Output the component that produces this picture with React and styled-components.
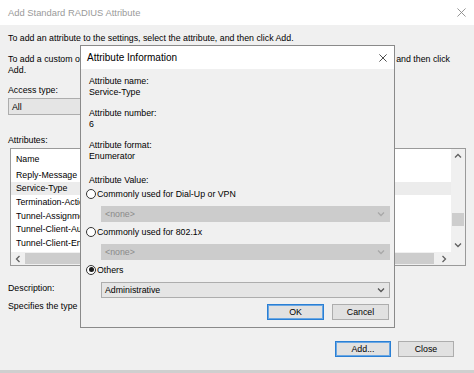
import React from 'react';
import styled, { createGlobalStyle } from 'styled-components';

const GlobalStyle = createGlobalStyle`
    html, body {
        margin: 0;
        padding: 0;
        background: #f0f0f0;
    }
    body {
        font-family: 'Liberation Sans', Arial, sans-serif;
        font-size: 8.8px;
        color: #000;
    }
    * {
        box-sizing: border-box;
    }
`;

const Window = styled.div`
    position: relative;
    width: 474px;
    height: 373px;
    overflow: hidden;
    display: flex;
    flex-direction: column;
    background: #f0f0f0;
`;

const TitleBar = styled.div`
    flex: none;
    height: ${p => p.$h}px;
    display: flex;
    align-items: center;
    justify-content: space-between;
    padding: 0 ${p => p.$pr}px 0 ${p => p.$pl}px;
    background: #fff;
    color: ${p => (p.$active ? '#000' : '#9a9a9a')};
    font-size: ${p => (p.$active ? 10 : 9.4)}px;
    white-space: nowrap;
`;

const Body = styled.div`
    flex: 1;
    display: flex;
    flex-direction: column;
    padding: 7px 8px 0;
`;

const Text = styled.div`
    line-height: ${p => p.$lh || 12}px;
    margin-top: ${p => p.$mt || 0}px;
    white-space: nowrap;
`;

const WrapLine = styled.div`
    display: flex;
    padding-right: 16px;
`;

const Tail = styled.span`
    margin-left: auto;
    white-space: nowrap;
`;

const Combo = styled.div`
    height: ${p => p.$h || 16}px;
    width: ${p => (p.$w ? `${p.$w}px` : 'auto')};
    margin: ${p => p.$m || '0'};
    display: flex;
    align-items: center;
    justify-content: space-between;
    padding: 0 4px 0 3px;
    background: ${p => (p.$disabled ? '#cccccc' : '#e5e5e5')};
    border: 1px solid ${p => (p.$disabled ? '#cccccc' : '#adadad')};
    color: ${p => (p.$disabled ? '#8a8a8a' : '#000')};
    white-space: nowrap;
`;

const ListBox = styled.div`
    margin: 2px 0 0 2px;
    height: 118px;
    border: 1px solid #9a9a9a;
    background: #fff;
    display: grid;
    grid-template-columns: 1fr 14px;
    grid-template-rows: 1fr 13px;
    overflow: hidden;
`;

const ListContent = styled.div`
    overflow: hidden;
`;

const ListHeader = styled.div`
    height: 19px;
    display: flex;
    align-items: center;
    padding-left: 5px;
`;

const ListRow = styled.div`
    height: 13.6px;
    display: flex;
    align-items: center;
    padding-left: 5px;
    background: ${p => (p.$selected ? '#ececec' : 'transparent')};
    white-space: nowrap;
`;

const VScroll = styled.div`
    display: flex;
    flex-direction: column;
    background: #f0f0f0;
`;

const HScroll = styled.div`
    display: flex;
    align-items: center;
    background: #f0f0f0;
`;

const ScrollButton = styled.div`
    flex: none;
    width: ${p => p.$w}px;
    height: ${p => p.$h}px;
    display: flex;
    align-items: center;
    justify-content: center;
`;

const VThumb = styled.div`
    height: 13px;
    margin: ${p => p.$offset}px 1px 0;
    background: #cdcdcd;
`;

const HThumb = styled.div`
    width: ${p => p.$len}px;
    height: 11px;
    background: #cdcdcd;
`;

const Spacer = styled.div`
    flex: 1;
`;

const Corner = styled.div`
    background: #f0f0f0;
`;

const Footer = styled.div`
    display: flex;
    justify-content: flex-end;
    gap: ${p => p.$gap}px;
    margin-top: ${p => p.$mt}px;
    padding-right: ${p => p.$pr}px;
`;

const Button = styled.button`
    width: ${p => p.$w}px;
    height: 16px;
    padding: 0;
    font-family: inherit;
    font-size: 8.8px;
    color: #000;
    background: #e1e1e1;
    border: 1px solid ${p => (p.$default ? '#2a7fd4' : '#adadad')};
    box-shadow: ${p => (p.$default ? 'inset 0 0 0 1px #6aa7e3' : 'none')};
`;

const BottomStrip = styled.div`
    flex: none;
    height: 3px;
    background: #cfcfcf;
`;

const Dialog = styled.div`
    position: absolute;
    left: 80px;
    top: 45px;
    width: 315px;
    height: 283px;
    border: 1px solid #8a8a8a;
    background: #f0f0f0;
    display: flex;
    flex-direction: column;
`;

const DialogBody = styled.div`
    flex: 1;
    display: flex;
    flex-direction: column;
    padding: 7px 4px 0 5px;
`;

const Group = styled.div`
    margin-top: ${p => p.$mt || 0}px;
    padding-left: 3px;
    line-height: 11px;
`;

const RadioRow = styled.div`
    height: 13px;
    margin-top: ${p => p.$mt || 0}px;
    display: flex;
    align-items: center;
    gap: 1px;
    white-space: nowrap;
`;

const RadioCircle = styled.span`
    flex: none;
    width: 10px;
    height: 10px;
    border-radius: 50%;
    border: 1px solid #333;
    background: #fff;
    display: flex;
    align-items: center;
    justify-content: center;
    &::after {
        content: '';
        display: ${p => (p.$checked ? 'block' : 'none')};
        width: 5px;
        height: 5px;
        border-radius: 50%;
        background: #1a1a1a;
    }
`;

const CloseIcon = ({ size, color }) => (
    <svg width={size} height={size} viewBox="0 0 10 10">
        <path d="M0.5 0.5 L9.5 9.5 M9.5 0.5 L0.5 9.5" stroke={color} strokeWidth="1" fill="none" />
    </svg>
);

const Chevron = ({ dir, color = '#606060' }) => {
    const paths = {
        down: 'M1 1.5 L4 4.5 L7 1.5',
        up: 'M1 4.5 L4 1.5 L7 4.5',
        left: 'M4.5 1 L1.5 4 L4.5 7',
        right: 'M1.5 1 L4.5 4 L1.5 7'
    };
    const vertical = dir === 'up' || dir === 'down';

    return (
        <svg width={vertical ? 8 : 6} height={vertical ? 6 : 8} viewBox={vertical ? '0 0 8 6' : '0 0 6 8'}>
            <path d={paths[dir]} stroke={color} strokeWidth="1.3" fill="none" />
        </svg>
    );
};

const ATTRIBUTES = [
    'Reply-Message',
    'Service-Type',
    'Termination-Action',
    'Tunnel-Assignment-ID',
    'Tunnel-Client-Auth-ID',
    'Tunnel-Client-Endpt'
];

const AttributeList = () => (
    <ListBox>
        <ListContent>
            <ListHeader>Name</ListHeader>
            { ATTRIBUTES.map(name => (
                <ListRow key={ name } $selected={ name === 'Service-Type' }>{ name }</ListRow>
            )) }
        </ListContent>
        <VScroll>
            <ScrollButton $w={14} $h={14}><Chevron dir="up" /></ScrollButton>
            <VThumb $offset={50} />
            <Spacer />
            <ScrollButton $w={14} $h={14}><Chevron dir="down" /></ScrollButton>
        </VScroll>
        <HScroll>
            <ScrollButton $w={14} $h={13}><Chevron dir="left" /></ScrollButton>
            <HThumb $len={409} />
            <Spacer />
            <ScrollButton $w={14} $h={13}><Chevron dir="right" /></ScrollButton>
        </HScroll>
        <Corner />
    </ListBox>
);

const ValueOption = ({ label, value, checked, disabled, mt }) => (
    <>
        <RadioRow $mt={ mt }>
            <RadioCircle $checked={ checked } />
            { label }
        </RadioRow>
        <Combo $disabled={ disabled } $m="6px 0 0 15px">
            { value }
            <Chevron dir="down" color={ disabled ? '#a8a8a8' : '#555' } />
        </Combo>
    </>
);

const AttributeInfoDialog = () => (
    <Dialog>
        <TitleBar $h={23} $pl={6} $pr={7} $active>
            Attribute Information
            <CloseIcon size={8} color="#222" />
        </TitleBar>
        <DialogBody>
            <Group>
                <div>Attribute name:</div>
                <div>Service-Type</div>
            </Group>
            <Group $mt={10}>
                <div>Attribute number:</div>
                <div>6</div>
            </Group>
            <Group $mt={10}>
                <div>Attribute format:</div>
                <div>Enumerator</div>
            </Group>
            <Group $mt={12.5}>Attribute Value:</Group>
            <ValueOption mt={1.5} label="Commonly used for Dial-Up or VPN" value="<none>" disabled />
            <ValueOption mt={3} label="Commonly used for 802.1x" value="<none>" disabled />
            <ValueOption mt={3} label="Others" value="Administrative" checked />
            <Footer $gap={8} $mt={6} $pr={1}>
                <Button $w={57} $default>OK</Button>
                <Button $w={57}>Cancel</Button>
            </Footer>
        </DialogBody>
    </Dialog>
);

export default function App() {
    return (
        <Window>
            <GlobalStyle />
            <TitleBar $h={25} $pl={8} $pr={8}>
                Add Standard RADIUS Attribute
                <CloseIcon size={9} color="#8a8a8a" />
            </TitleBar>
            <Body>
                <Text>To add an attribute to the settings, select the attribute, and then click Add.</Text>
                <Text $lh={11} $mt={10}>
                    <WrapLine>
                        <span>To add a custom or predefined Vendor Specific attribute, close this dialog,</span>
                        <Tail>and then click</Tail>
                    </WrapLine>
                    Add.
                </Text>
                <Text $mt={8}>Access type:</Text>
                <Combo $h={17} $w={220} $m="2px 0 0">All</Combo>
                <Text $mt={19}>Attributes:</Text>
                <AttributeList />
                <Text $mt={15.5}>Description:</Text>
                <Text $mt={6}>Specifies the type of service being requested.</Text>
                <Footer $gap={7} $mt={29.5} $pr={12}>
                    <Button $w={56} $default>Add...</Button>
                    <Button $w={56}>Close</Button>
                </Footer>
            </Body>
            <BottomStrip />
            <AttributeInfoDialog />
        </Window>
    );
}
